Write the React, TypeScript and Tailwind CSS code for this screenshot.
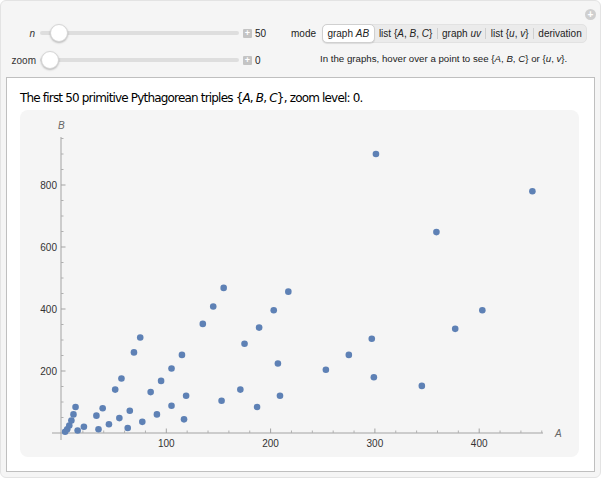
import React from 'react'

// (u, v) generators; A = u^2 - v^2, B = 2uv
const uv: [number, number][] = [
  [2, 1], [3, 2], [4, 3], [5, 4], [6, 5], [7, 6], [4, 1], [5, 2], [6, 1], [7, 4],
  [7, 2], [8, 5], [8, 3], [8, 1], [9, 4], [9, 2], [10, 7], [11, 8], [10, 3], [11, 6],
  [12, 7], [13, 8], [11, 4], [14, 9], [11, 2], [12, 5], [13, 10], [14, 11], [16, 11], [17, 12],
  [13, 4], [18, 13], [14, 5], [16, 9], [14, 3], [17, 10], [18, 11], [16, 7], [15, 4], [19, 12],
  [17, 6], [18, 7], [19, 8], [18, 5], [19, 4], [21, 8], [22, 9], [25, 18], [26, 15],
]
const points: [number, number][] = [...uv.map(([u, v]) => [u * u - v * v, 2 * u * v] as [number, number]), [359, 648]]

const X = (a: number) => 42 + a * 1.043
const Y = (b: number) => 323 - b * 0.31

function Slider({ label, italic, pos, value }: { label: string; italic?: boolean; pos: number; value: string }) {
  return (
    <div className="flex items-center h-[18px]">
      <span className={`w-[35px] text-right text-[10px] text-[#333] ${italic ? 'italic pr-[1px]' : ''}`}>{label}</span>
      <div className="relative ml-[4px] w-[199px] h-[18px] flex items-center">
        <div className="w-full h-[4px] rounded-full bg-[#dedede]" />
        <div
          className="absolute top-0 w-[18px] h-[18px] rounded-full bg-white border border-[#d6d6d6] shadow-[0_1px_2px_rgba(0,0,0,0.25)]"
          style={{ left: pos }}
        />
      </div>
      <div className="ml-[4px] w-[9px] h-[9px] bg-[#c4c4c4] rounded-[1px] flex items-center justify-center text-white text-[9px] leading-none font-bold">+</div>
      <span className="ml-[3px] text-[10px] text-[#222]">{value}</span>
    </div>
  )
}

function Plot() {
  const xMajor = [100, 200, 300, 400]
  const xMinor: number[] = []
  for (let a = 20; a <= 460; a += 20) if (a % 100 !== 0) xMinor.push(a)
  const yMajor = [200, 400, 600, 800]
  const yMinor: number[] = []
  for (let b = 50; b <= 950; b += 50) if (b % 200 !== 0) yMinor.push(b)
  return (
    <svg width="559" height="347" className="block" style={{ fontFamily: '"Liberation Sans", Arial, sans-serif' }}>
      <line x1="32" y1="323" x2="523" y2="323" stroke="#a3a3a3" strokeWidth="1" />
      <line x1="41" y1="27" x2="41" y2="330" stroke="#a3a3a3" strokeWidth="1" />
      {xMajor.map((a) => (
        <g key={a}>
          <line x1={X(a)} y1="323" x2={X(a)} y2="318.5" stroke="#a3a3a3" />
          <text x={X(a)} y="337" fontSize="10" textAnchor="middle" fill="#333">{a}</text>
        </g>
      ))}
      {xMinor.map((a) => (
        <line key={a} x1={X(a)} y1="323" x2={X(a)} y2="320.5" stroke="#b0b0b0" />
      ))}
      {yMajor.map((b) => (
        <g key={b}>
          <line x1="41" y1={Y(b)} x2="45.5" y2={Y(b)} stroke="#a3a3a3" />
          <text x="37" y={Y(b) + 3.5} fontSize="10" textAnchor="end" fill="#333">{b}</text>
        </g>
      ))}
      {yMinor.map((b) => (
        <line key={b} x1="41" y1={Y(b)} x2="43.5" y2={Y(b)} stroke="#b0b0b0" />
      ))}
      <text x="535" y="327" fontSize="10" fontStyle="italic" fill="#666">A</text>
      <text x="38" y="19" fontSize="10" fontStyle="italic" fill="#666">B</text>
      {points.map(([a, b]) => (
        <circle key={`${a}-${b}`} cx={X(a)} cy={Y(b)} r="3.3" fill="#5e81b5" />
      ))}
    </svg>
  )
}

export default function App() {
  const modes = [
    { key: 'gab', node: <span>graph <i>AB</i></span> },
    { key: 'labc', node: <span>list {'{'}<i>A</i>, <i>B</i>, <i>C</i>{'}'}</span> },
    { key: 'guv', node: <span>graph <i>uv</i></span> },
    { key: 'luv', node: <span>list {'{'}<i>u</i>, <i>v</i>{'}'}</span> },
    { key: 'der', node: <span>derivation</span> },
  ]
  return (
    <div className="w-[602px] h-[479px] bg-white" style={{ fontFamily: '"Liberation Sans", Arial, sans-serif' }}>
      <div className="relative w-[601px] h-[478px] rounded-[6px] border border-[#e3e3e3] bg-[#f5f5f5]">
        <div className="absolute right-[4px] top-[8px] w-[11px] h-[11px] rounded-full bg-[#cfcfcf] flex items-center justify-center text-white text-[10px] leading-none font-bold">+</div>
        <div className="flex h-[76px]">
          <div className="flex flex-col pt-[23px] gap-[9px] w-[285px]">
            <Slider label="n" italic pos={10} value="50" />
            <Slider label="zoom" pos={1} value="0" />
          </div>
          <div className="flex flex-col pt-[23px] gap-[9px]">
            <div className="flex items-center">
              <span className="text-[10px] text-[#222] ml-[5px] mr-[6px]">mode</span>
              <div className="flex items-center h-[19px] rounded-[5px] bg-[#ebebeb] border border-[#e2e2e2] text-[10px] text-[#222]">
                {modes.map((m, i) => (
                  <React.Fragment key={m.key}>
                    {i > 1 && <div className="w-px h-[11px] bg-[#cfcfcf]" />}
                    <div
                      className={
                        i === 0
                          ? 'h-[19px] -my-px -ml-px px-[4.4px] flex items-center rounded-[5px] bg-white border border-[#d0d0d0] shadow-[0_1px_1px_rgba(0,0,0,0.1)]'
                          : 'px-[4.4px] flex items-center'
                      }
                    >
                      {m.node}
                    </div>
                  </React.Fragment>
                ))}
              </div>
            </div>
            <div className="pl-[34px] text-[9.7px] text-[#222]">
              In the graphs, hover over a point to see {'{'}<i>A</i>, <i>B</i>, <i>C</i>{'}'} or {'{'}<i>u</i>, <i>v</i>{'}'}.
            </div>
          </div>
        </div>
        <div className="mx-[5px] h-[395px] border border-[#bfbfbf] bg-white px-[13px] pt-[12px]">
          <div className="text-[12px] text-black leading-[16px] mb-[4px]" style={{ fontFamily: '"DejaVu Sans", Verdana, sans-serif', letterSpacing: '-0.82px' }}>
            The first 50 primitive Pythagorean triples {'{'}<i>A</i>, <i>B</i>, <i>C</i>{'}'}, zoom level: 0.
          </div>
          <div className="w-[559px] h-[347px] rounded-[8px] bg-[#f5f5f5]">
            <Plot />
          </div>
        </div>
      </div>
    </div>
  )
}
